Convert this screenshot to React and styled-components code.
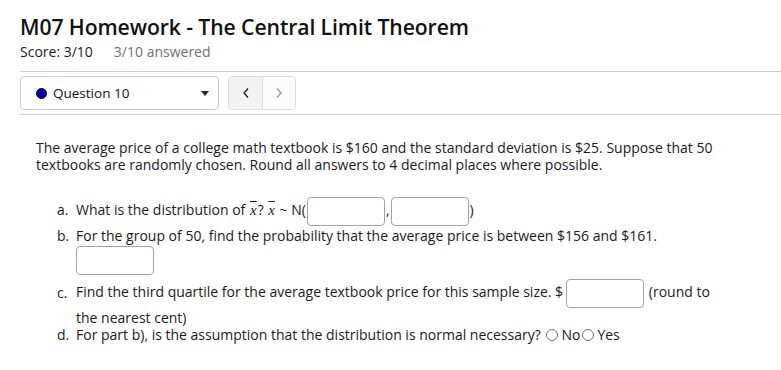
import React from "react";
import styled, { createGlobalStyle } from "styled-components";

const GlobalStyle = createGlobalStyle`
  body {
    margin: 0;
    background: #fff;
    font-family: "Open Sans", "Liberation Sans", sans-serif;
    color: #1a1a1a;
  }
`;

const Page = styled.div`
  padding-left: 20px;
`;

const Title = styled.h1`
  margin: 14px 0 0 0;
  font-size: 21.2px;
  line-height: 26px;
  font-weight: 600;
  letter-spacing: -0.1px;
  color: #111;
`;

const ScoreRow = styled.div`
  display: flex;
  gap: 21px;
  margin-top: 4px;
  font-size: 14px;
  line-height: 16px;
`;

const Muted = styled.span`
  color: #707070;
`;

const Rule = styled.div`
  height: 1px;
  background: #cfcfcf;
  margin-top: ${(p) => p.$top}px;
`;

const Toolbar = styled.div`
  display: flex;
  align-items: center;
  gap: 9px;
  margin-top: 4px;
  height: 34px;
`;

const Select = styled.div`
  box-sizing: border-box;
  width: 199px;
  height: 34px;
  border: 1px solid #cdcdcd;
  border-radius: 4px;
  display: flex;
  align-items: center;
  padding: 0 8px 0 15px;
  font-size: 13.5px;
  color: #111;
`;

const Dot = styled.span`
  width: 11px;
  height: 11px;
  box-sizing: border-box;
  border-radius: 50%;
  background: #00009c;
  border: 1px solid #00003a;
  margin-right: 6px;
`;

const SelectLabel = styled.span`
  flex: 1;
`;

const Caret = styled.span`
  width: 0;
  height: 0;
  border-left: 4px solid transparent;
  border-right: 4px solid transparent;
  border-top: 5px solid #222;
  margin-right: 1px;
`;

const NavGroup = styled.div`
  display: flex;
  height: 34px;
  border: 1px solid #dcdcdc;
  border-radius: 4px;
  overflow: hidden;
  box-sizing: border-box;
`;

const NavButton = styled.button`
  width: 33px;
  border: none;
  padding: 0;
  display: flex;
  align-items: center;
  justify-content: center;
  background: ${(p) => (p.$active ? "#f2f2f2" : "#fbfbfb")};
  color: ${(p) => (p.$active ? "#222" : "#9a9a9a")};
  & + & {
    border-left: 1px solid #dcdcdc;
  }
`;

const Content = styled.div`
  padding-left: 16px;
  width: 692px;
  font-size: 14px;
  line-height: 16.8px;
`;

const Para = styled.p`
  margin: 25px 0 0 0;
`;

const List = styled.div`
  margin-top: 21px;
  padding-left: 21px;
`;

const Item = styled.div`
  display: flex;
  align-items: baseline;
`;

const Marker = styled.span`
  width: 19px;
  flex: none;
`;

const Body = styled.div`
  flex: 1;
`;

const Box = styled.input`
  box-sizing: border-box;
  width: 78px;
  height: 29px;
  margin: 2px 1px 2px ${(p) => (p.$left !== undefined ? p.$left : 1)}px;
  border: 1px solid #a3a3a3;
  border-radius: 4px;
  vertical-align: middle;
  background: #fff;
  padding: 0;
`;

const XBar = styled.span`
  font-family: "Liberation Serif", "DejaVu Serif", serif;
  font-style: italic;
  font-size: 15px;
  text-decoration: overline;
  text-decoration-thickness: 1px;
  padding: 0 1px;
`;

const Radio = styled.input`
  appearance: none;
  width: 12px;
  height: 12px;
  margin: 0 3px 0 2px;
  border: 1px solid #707070;
  border-radius: 50%;
  vertical-align: -1px;
  background: #fff;
`;

const Chevron = ({ dir }) => (
  <svg width="8" height="12" viewBox="0 0 8 12" fill="none">
    <path
      d={dir === "left" ? "M6 1.5 L2 6 L6 10.5" : "M2 1.5 L6 6 L2 10.5"}
      stroke="currentColor"
      strokeWidth="1.4"
    />
  </svg>
);

export default function App() {
  return (
    <>
      <GlobalStyle />
      <Page>
        <Title>M07 Homework - The Central Limit Theorem</Title>
        <ScoreRow>
          <span>Score: 3/10</span>
          <Muted>3/10 answered</Muted>
        </ScoreRow>
        <Rule $top={11} />
        <Toolbar>
          <Select>
            <Dot />
            <SelectLabel>Question 10</SelectLabel>
            <Caret />
          </Select>
          <NavGroup>
            <NavButton $active>
              <Chevron dir="left" />
            </NavButton>
            <NavButton>
              <Chevron dir="right" />
            </NavButton>
          </NavGroup>
        </Toolbar>
        <Rule $top={4} />
        <Content>
          <Para>
            The average price of a college math textbook is $160 and the standard deviation is $25. Suppose that 50
            textbooks are randomly chosen. Round all answers to 4 decimal places where possible.
          </Para>
          <List>
            <Item>
              <Marker>a.</Marker>
              <Body>
                What is the distribution of <XBar>x</XBar>? <XBar>x</XBar> ~ N(
                <Box type="text" />,<Box type="text" />)
              </Body>
            </Item>
            <Item>
              <Marker>b.</Marker>
              <Body>
                For the group of 50, find the probability that the average price is between $156 and $161.
                <br />
                <Box type="text" $left={0} />
              </Body>
            </Item>
            <Item>
              <Marker>c.</Marker>
              <Body>
                Find the third quartile for the average textbook price for this sample size. $<Box type="text" $left={3} /> (round to
                the nearest cent)
              </Body>
            </Item>
            <Item>
              <Marker>d.</Marker>
              <Body>
                For part b), is the assumption that the distribution is normal necessary? <Radio type="radio" name="d" />No
                <Radio type="radio" name="d" />Yes
              </Body>
            </Item>
          </List>
        </Content>
      </Page>
    </>
  );
}
